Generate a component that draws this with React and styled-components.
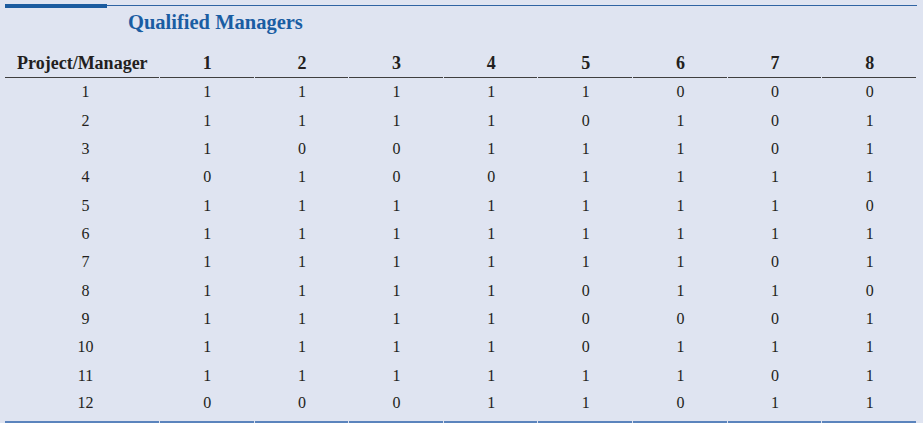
import React from "react";
import styled, { createGlobalStyle } from "styled-components";

const Global = createGlobalStyle`
  html, body { margin: 0; padding: 0; background: #dfe4f1; }
  body { font-family: "Liberation Serif", "Times New Roman", serif; color: #231f20; }
`;

const Page = styled.div`
  width: 923px;
  height: 423px;
  box-sizing: border-box;
  padding: 4px 6px 0 5px;
  background: #dfe4f1;
  overflow: hidden;
`;

const TopRule = styled.div`
  display: flex;
  align-items: flex-start;
  height: 5px;
`;

const ThickBar = styled.div`
  width: 102px;
  height: 4px;
  background: #1b5b9f;
`;

const ThinLine = styled.div`
  flex: 1;
  height: 1px;
  margin-top: 1px;
  background: #2f64a3;
`;

const Title = styled.div`
  padding-left: 123px;
  height: 27px;
  line-height: 27px;
  font-size: 20.5px;
  font-weight: bold;
  color: #1a5da3;
`;

const Table = styled.table`
  width: 912px;
  border-collapse: separate;
  border-spacing: 0;
  table-layout: fixed;
  margin-top: 14px;
`;

const HeadRow = styled.tr`
  height: 28px;
`;

const BodyRow = styled.tr`
  height: ${(p) => (p.$last ? "33px" : "28.36px")};
`;

const Gap = `
  &::after {
    content: "";
    position: absolute;
    right: 0;
    bottom: -2px;
    width: 1px;
    height: 2px;
    background: #dfe4f1;
  }
`;

const HeadCell = styled.th`
  box-sizing: border-box;
  padding: 0 0 0 ${(p) => (p.$left ? "12px" : "0")};
  font-size: 18px;
  font-weight: bold;
  text-align: ${(p) => (p.$left ? "left" : "center")};
  vertical-align: middle;
  border-bottom: 1.5px solid #3f3f3f;
  position: relative;
  ${Gap}
`;

const Cell = styled.td`
  box-sizing: border-box;
  padding: 0 0 ${(p) => (p.$last ? "5px" : "0")} ${(p) => (p.$first ? "6px" : "0")};
  font-size: 16px;
  text-align: center;
  vertical-align: middle;
  border-bottom: ${(p) => (p.$last ? "2px solid #5b84bd" : "none")};
  position: relative;
  ${(p) => (p.$last ? Gap : "")}
`;

const data = [
  [1, 1, 1, 1, 1, 0, 0, 0],
  [1, 1, 1, 1, 0, 1, 0, 1],
  [1, 0, 0, 1, 1, 1, 0, 1],
  [0, 1, 0, 0, 1, 1, 1, 1],
  [1, 1, 1, 1, 1, 1, 1, 0],
  [1, 1, 1, 1, 1, 1, 1, 1],
  [1, 1, 1, 1, 1, 1, 0, 1],
  [1, 1, 1, 1, 0, 1, 1, 0],
  [1, 1, 1, 1, 0, 0, 0, 1],
  [1, 1, 1, 1, 0, 1, 1, 1],
  [1, 1, 1, 1, 1, 1, 0, 1],
  [0, 0, 0, 1, 1, 0, 1, 1],
];

export default function App() {
  return (
    <Page>
      <Global />
      <TopRule>
        <ThickBar />
        <ThinLine />
      </TopRule>
      <Title>Qualified Managers</Title>
      <Table>
        <colgroup>
          <col style={{ width: "155px" }} />
          {Array.from({ length: 8 }).map((_, i) => (
            <col key={i} style={{ width: "94.6px" }} />
          ))}
        </colgroup>
        <thead>
          <HeadRow>
            <HeadCell $left>Project/Manager</HeadCell>
            {[1, 2, 3, 4, 5, 6, 7, 8].map((n) => (
              <HeadCell key={n}>{n}</HeadCell>
            ))}
          </HeadRow>
        </thead>
        <tbody>
          {data.map((row, r) => {
            const last = r === data.length - 1;
            return (
              <BodyRow key={r} $last={last}>
                <Cell $last={last} $first>
                  {r + 1}
                </Cell>
                {row.map((v, c) => (
                  <Cell key={c} $last={last}>
                    {v}
                  </Cell>
                ))}
              </BodyRow>
            );
          })}
        </tbody>
      </Table>
    </Page>
  );
}
